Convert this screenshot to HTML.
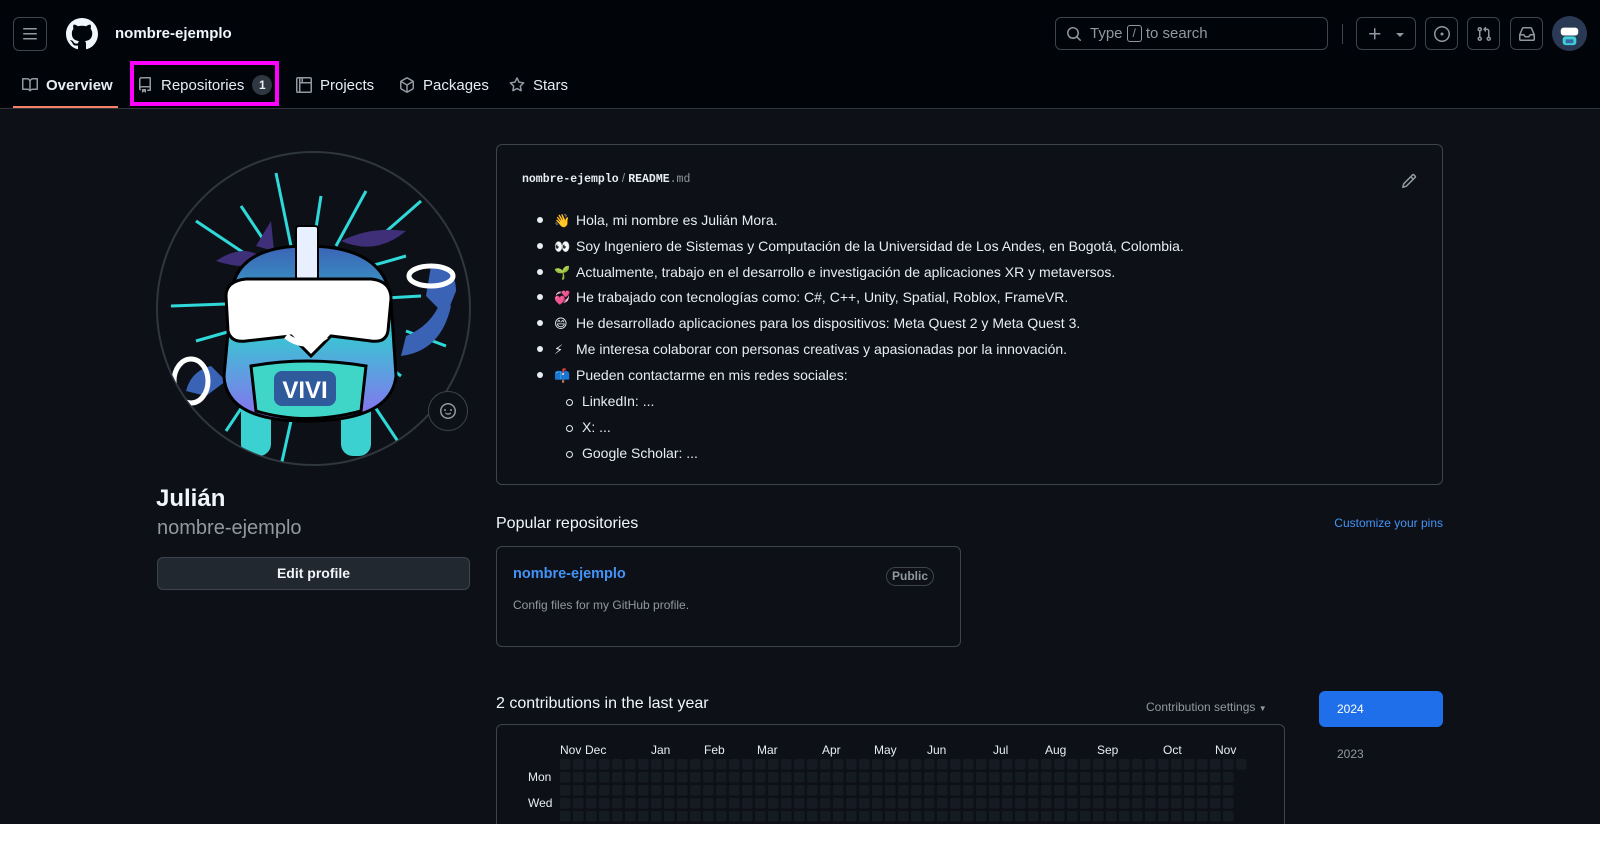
<!DOCTYPE html>
<html><head><meta charset="utf-8">
<style>
*{box-sizing:border-box;margin:0;padding:0}
html,body{width:1600px;height:859px;overflow:hidden;background:#fff;font-family:"Liberation Sans","Noto Sans CJK JP",sans-serif;color:#e6edf3}
#app{position:absolute;left:0;top:0;width:1600px;height:824px;background:#0d1117;overflow:hidden}
.hdr{position:absolute;left:0;top:0;width:1600px;height:109px;background:#010409;border-bottom:1px solid #30363d}
.abs{position:absolute}
.btn{position:absolute;border:1px solid #3d444d;border-radius:6px;display:flex;align-items:center;justify-content:center}
.tab{position:absolute;top:75px;font-size:15px;color:#e6edf3;display:flex;align-items:center;gap:8px;height:20px}
.tab svg{fill:#9198a1}
.card{position:absolute;border:1px solid #3d444d;border-radius:6px}
ul.r{position:absolute;left:539px;top:210px;list-style:none;font-size:14px;color:#e6edf3}
ul.r li{height:25.8px;line-height:20px;position:relative;padding-left:15px;white-space:nowrap}
ul.r li:before{content:"";position:absolute;left:-2px;top:7px;width:6px;height:6px;border-radius:50%;background:#e6edf3}
ul.r li .e{display:inline-block;width:22px;font-size:13px;font-family:"DejaVu Sans",sans-serif}
ul.s li{padding-left:43px}
ul.s li:before{left:27px;top:8px;width:5px;height:5px;background:none;border:1.2px solid #e6edf3}
.mo{position:absolute;top:743px;font-size:12px;color:#e6edf3}
</style></head><body>
<div id="app">
<div class="hdr">
  <div class="btn" style="left:13px;top:17px;width:34px;height:34px">
    <svg width="16" height="16" viewBox="0 0 16 16" fill="#9198a1"><path d="M1 2.75A.75.75 0 0 1 1.75 2h12.5a.75.75 0 0 1 0 1.5H1.75A.75.75 0 0 1 1 2.75Zm0 5A.75.75 0 0 1 1.75 7h12.5a.75.75 0 0 1 0 1.5H1.75A.75.75 0 0 1 1 7.75ZM1.75 12h12.5a.75.75 0 0 1 0 1.5H1.75a.75.75 0 0 1 0-1.5Z"/></svg>
  </div>
  <svg class="abs" style="left:66px;top:18px" width="32" height="32" viewBox="0 0 16 16" fill="#f0f6fc"><path d="M8 0c4.42 0 8 3.58 8 8a8.013 8.013 0 0 1-5.45 7.590c-.4.08-.55-.17-.55-.38 0-.27.01-1.130.01-2.2 0-.75-.25-1.23-.54-1.48 1.78-.2 3.65-.88 3.65-3.95 0-.88-.31-1.590-.82-2.150.08-.2.36-1.020-.08-2.12 0 0-.67-.22-2.2.82-.64-.18-1.32-.27-2-.27-.68 0-1.36.09-2 .27-1.53-1.03-2.2-.82-2.2-.82-.44 1.1-.16 1.92-.08 2.12-.51.56-.82 1.28-.82 2.15 0 3.06 1.86 3.75 3.64 3.95-.23.2-.44.55-.51 1.070-.46.21-1.61.55-2.33-.66-.15-.24-.6-.83-1.23-.82-.67.01-.27.38.01.53.34.19.73.9.82 1.13.16.45.68 1.31 2.69.94 0 .67.01 1.3.01 1.49 0 .21-.15.45-.55.38A7.995 7.995 0 0 1 0 8c0-4.42 3.58-8 8-8Z"/></svg>
  <div class="abs" style="left:115px;top:25px;font-size:15px;font-weight:bold;color:#f0f6fc">nombre-ejemplo</div>

  <div class="btn" style="left:1055px;top:17px;width:273px;height:33px;justify-content:flex-start;padding-left:10px;gap:8px;color:#9198a1;font-size:15px">
    <svg width="16" height="16" viewBox="0 0 16 16" fill="#9198a1"><path d="M10.68 11.74a6 6 0 0 1-7.922-8.982 6 6 0 0 1 8.982 7.922l3.04 3.04a.749.749 0 0 1-1.06 1.06ZM11.5 7a4.499 4.499 0 1 0-8.997 0A4.499 4.499 0 0 0 11.5 7Z"/></svg>
    <span>Type <span style="display:inline-block;border:1px solid #9198a1;border-radius:3px;width:15px;height:17px;font-size:12px;text-align:center;line-height:15px;vertical-align:middle">/</span> to search</span>
  </div>
  <div class="abs" style="left:1342px;top:24px;width:1px;height:20px;background:#3d444d"></div>
  <div class="btn" style="left:1356px;top:17px;width:60px;height:33px;gap:12px">
    <svg width="16" height="16" viewBox="0 0 16 16" fill="#9198a1"><path d="M7.75 2a.75.75 0 0 1 .75.75V7h4.25a.75.75 0 0 1 0 1.5H8.5v4.25a.75.75 0 0 1-1.5 0V8.5H2.75a.75.75 0 0 1 0-1.5H7V2.75A.75.75 0 0 1 7.75 2Z"/></svg>
    <svg width="10" height="10" viewBox="0 0 10 10" fill="#9198a1"><path d="M1 4h8L5 8z"/></svg>
  </div>
  <div class="btn" style="left:1425px;top:17px;width:33px;height:33px">
    <svg width="16" height="16" viewBox="0 0 16 16" fill="#9198a1"><path d="M8 9.5a1.5 1.5 0 1 0 0-3 1.5 1.5 0 0 0 0 3Z"/><path d="M8 0a8 8 0 1 1 0 16A8 8 0 0 1 8 0ZM1.5 8a6.5 6.5 0 1 0 13 0 6.5 6.5 0 0 0-13 0Z"/></svg>
  </div>
  <div class="btn" style="left:1467px;top:17px;width:33px;height:33px">
    <svg width="16" height="16" viewBox="0 0 16 16" fill="#9198a1"><path d="M1.5 3.25a2.25 2.25 0 1 1 3 2.122v5.256a2.251 2.251 0 1 1-1.5 0V5.372A2.25 2.25 0 0 1 1.5 3.25Zm5.677-.177L9.573.677A.25.25 0 0 1 10 .854V2.5h1A2.5 2.5 0 0 1 13.5 5v5.628a2.251 2.251 0 1 1-1.5 0V5a1 1 0 0 0-1-1h-1v1.646a.25.25 0 0 1-.427.177L7.177 3.427a.25.25 0 0 1 0-.354ZM3.75 2.5a.75.75 0 1 0 0 1.5.75.75 0 0 0 0-1.5Zm0 9.5a.75.75 0 1 0 0 1.5.75.75 0 0 0 0-1.5Zm8.25.75a.75.75 0 1 0 1.5 0 .75.75 0 0 0-1.5 0Z"/></svg>
  </div>
  <div class="btn" style="left:1510px;top:17px;width:33px;height:33px">
    <svg width="16" height="16" viewBox="0 0 16 16" fill="#9198a1"><path d="M2.8 2.06A1.75 1.75 0 0 1 4.41 1h7.18c.7 0 1.333.417 1.61 1.06l2.74 6.395c.04.093.06.194.06.295v4.5A1.75 1.75 0 0 1 14.25 15H1.75A1.75 1.75 0 0 1 0 13.25v-4.5c0-.101.02-.202.06-.295Zm1.61.44a.25.25 0 0 0-.23.152L1.887 8H4.75a.75.75 0 0 1 .6.3L6.625 10h2.75l1.275-1.7a.75.75 0 0 1 .6-.3h2.863L11.82 2.652a.25.25 0 0 0-.23-.152Zm10.09 7h-2.875l-1.275 1.7a.75.75 0 0 1-.6.3h-3.5a.75.75 0 0 1-.6-.3L4.375 9.5H1.5v3.75c0 .138.112.25.25.25h12.5a.25.25 0 0 0 .25-.25Z"/></svg>
  </div>
  <svg class="abs" style="left:1552px;top:16px" width="35" height="35" viewBox="0 0 36 36">
    <circle cx="18" cy="18" r="18" fill="#2a3a55"/><rect x="9" y="12" width="18" height="8" rx="3" fill="#fff"/><rect x="11" y="21" width="14" height="9" rx="3" fill="#3fd1d6"/><rect x="14" y="24" width="8" height="4" fill="#3867a8"/>
  </svg>

  <div class="tab" style="left:22px;font-weight:bold"><svg width="16" height="16" viewBox="0 0 16 16"><path d="M0 1.75A.75.75 0 0 1 .75 1h4.253c1.227 0 2.317.59 3 1.501A3.743 3.743 0 0 1 11.006 1h4.245a.75.75 0 0 1 .75.75v10.5a.75.75 0 0 1-.75.75h-4.507a2.25 2.25 0 0 0-1.591.659l-.622.621a.75.75 0 0 1-1.06 0l-.622-.621A2.25 2.25 0 0 0 5.258 13H.75a.75.75 0 0 1-.75-.75Zm7.251 10.324.004-5.073-.002-2.253A2.25 2.25 0 0 0 5.003 2.5H1.5v9h3.757a3.75 3.75 0 0 1 1.994.574ZM8.755 4.75l-.004 7.322a3.752 3.752 0 0 1 1.992-.572H14.5v-9h-3.495a2.25 2.25 0 0 0-2.25 2.25Z"/></svg>Overview</div>
  <div class="abs" style="left:13px;top:106px;width:105px;height:2px;background:#f78166"></div>
  <div class="abs" style="left:130px;top:61px;width:149px;height:45px;border:4px solid #ff00ff"></div>
  <div class="tab" style="left:137px"><svg width="16" height="16" viewBox="0 0 16 16"><path d="M2 2.5A2.5 2.5 0 0 1 4.5 0h8.75a.75.75 0 0 1 .75.75v12.5a.75.75 0 0 1-.75.75h-2.5a.75.75 0 0 1 0-1.5h1.75v-2h-8a1 1 0 0 0-.714 1.7.75.75 0 1 1-1.072 1.05A2.495 2.495 0 0 1 2 11.5Zm10.5-1h-8a1 1 0 0 0-1 1v6.708A2.486 2.486 0 0 1 4.5 9h8ZM5 12.25a.25.25 0 0 1 .25-.25h3.5a.25.25 0 0 1 .25.25v3.25a.25.25 0 0 1-.4.2l-1.45-1.087a.249.249 0 0 0-.3 0L5.4 15.7a.25.25 0 0 1-.4-.2Z"/></svg>Repositories<span style="display:inline-block;background:#2f3742;border-radius:10px;width:20px;height:20px;text-align:center;line-height:20px;font-size:12px;font-weight:bold">1</span></div>
  <div class="tab" style="left:296px"><svg width="16" height="16" viewBox="0 0 16 16"><path d="M1.75 0h12.5C15.216 0 16 .784 16 1.75v12.5A1.75 1.75 0 0 1 14.25 16H1.75A1.75 1.75 0 0 1 0 14.25V1.75C0 .784.784 0 1.750 0ZM1.5 1.75v12.5c0 .138.112.25.25.25H3V1.5H1.750a.25.25 0 0 0-.25.25ZM14.25 14.5a.25.25 0 0 0 .25-.25V1.75a.25.25 0 0 0-.25-.25H4.5v13ZM5.5 5.5V1.5h1.5v4Z"/><path d="M4.5 5h10v1.5h-10z"/></svg>Projects</div>
  <div class="tab" style="left:399px"><svg width="16" height="16" viewBox="0 0 16 16"><path d="m8.878.392 5.25 3.045c.54.314.872.89.872 1.514v6.098a1.75 1.75 0 0 1-.872 1.514l-5.25 3.045a1.75 1.75 0 0 1-1.756 0l-5.25-3.045A1.75 1.75 0 0 1 1 11.049V4.951c0-.624.332-1.201.872-1.514L7.122.392a1.75 1.75 0 0 1 1.756 0ZM7.875 1.69l-4.63 2.685L8 7.133l4.755-2.758-4.63-2.685a.248.248 0 0 0-.25 0ZM2.5 5.677v5.372c0 .09.047.171.125.216l4.625 2.683V8.432Zm6.25 8.271 4.625-2.683a.25.25 0 0 0 .125-.216V5.677L8.75 8.432Z"/></svg>Packages</div>
  <div class="tab" style="left:509px"><svg width="16" height="16" viewBox="0 0 16 16"><path d="M8 .25a.75.75 0 0 1 .673.418l1.882 3.815 4.21.612a.75.75 0 0 1 .416 1.279l-3.046 2.970.719 4.192a.751.751 0 0 1-1.088.791L8 12.347l-3.766 1.98a.75.75 0 0 1-1.088-.79l.72-4.194L.818 6.374a.75.75 0 0 1 .416-1.28l4.21-.611L7.327.668A.75.75 0 0 1 8 .25Zm0 2.445L6.615 5.5a.75.75 0 0 1-.564.41l-3.097.45 2.240 2.184a.75.75 0 0 1 .216.664l-.528 3.084 2.769-1.456a.75.75 0 0 1 .698 0l2.770 1.456-.53-3.084a.75.75 0 0 1 .216-.664l2.240-2.183-3.096-.45a.75.75 0 0 1-.564-.41L8 2.694Z"/></svg>Stars</div>
</div>

<svg class="abs" style="left:156px;top:151px" width="315" height="315" viewBox="0 0 315 315">
  <defs>
    <clipPath id="c"><circle cx="157.5" cy="157.5" r="156"/></clipPath>
    <linearGradient id="b" x1="0" y1="0" x2="0" y2="1"><stop offset="0" stop-color="#3b63b5"/><stop offset=".5" stop-color="#39c6d3"/><stop offset="1" stop-color="#8a6ff0"/></linearGradient>
  </defs>
  <circle cx="157.5" cy="157.5" r="156.5" fill="#0d1117" stroke="#30363d" stroke-width="2"/>
  <g clip-path="url(#c)">
    <g stroke="#2fd9d9" stroke-width="3">
      <line x1="120" y1="22" x2="135" y2="95"/><line x1="165" y1="45" x2="158" y2="90"/><line x1="210" y1="40" x2="180" y2="95"/>
      <line x1="265" y1="50" x2="225" y2="85"/><line x1="85" y1="55" x2="115" y2="100"/><line x1="40" y1="70" x2="100" y2="110"/>
      <line x1="15" y1="155" x2="70" y2="153"/><line x1="40" y1="190" x2="75" y2="180"/><line x1="250" y1="105" x2="215" y2="115"/>
      <line x1="265" y1="145" x2="230" y2="147"/><line x1="290" y1="195" x2="250" y2="180"/><line x1="245" y1="295" x2="215" y2="250"/>
      <line x1="125" y1="315" x2="135" y2="270"/><line x1="70" y1="280" x2="90" y2="250"/><line x1="245" y1="225" x2="225" y2="210"/>
    </g>
    <path d="M60 110 Q90 90 110 110 Q90 120 60 110Z" fill="#3e2f78"/><path d="M100 95 L115 70 L118 100Z" fill="#3e2f78"/>
    <path d="M185 90 Q215 75 250 80 Q220 105 185 90Z" fill="#3e2f78"/>
    <path d="M275 115 Q300 115 300 140 L290 165 L270 145Z" fill="#3b63b5"/>
    <ellipse cx="275" cy="125" rx="22" ry="10" fill="none" stroke="#fff" stroke-width="5"/>
    <path d="M250 185 Q275 175 285 150 L295 155 Q285 200 245 205Z" fill="#3b63b5"/>
    <path d="M55 215 Q35 220 30 240 L50 245 L70 230Z" fill="#3b63b5"/>
    <ellipse cx="35" cy="230" rx="17" ry="22" fill="none" stroke="#fff" stroke-width="5"/>
    <rect x="85" y="250" width="30" height="55" rx="12" fill="#3bd1d0"/><rect x="185" y="250" width="30" height="55" rx="12" fill="#3bd1d0"/>
    <path d="M75 150 Q75 95 150 95 Q230 95 235 150 L240 225 Q235 270 150 270 Q70 270 68 225Z" fill="url(#b)" stroke="#000" stroke-width="3"/>
    <rect x="140" y="75" width="22" height="55" rx="3" fill="#e8f0ff" stroke="#000" stroke-width="2"/>
    <path d="M70 145 Q70 130 90 128 L215 128 Q235 130 235 148 L232 180 Q230 192 215 190 L175 185 L155 205 L135 185 L90 190 Q75 192 72 180Z" fill="#fff" stroke="#000" stroke-width="3"/>
    <path d="M130 185 Q150 200 170 185" fill="none" stroke="#fff" stroke-width="6"/>
    <path d="M95 215 Q150 205 210 215 L205 260 Q150 275 100 260Z" fill="#3fd6c8" stroke="#000" stroke-width="3"/>
    <rect x="118" y="220" width="62" height="35" rx="8" fill="#2f5a9c"/>
    <text x="149" y="247" text-anchor="middle" font-family="Liberation Sans" font-weight="bold" font-size="24" fill="#fff">VIVI</text>
  </g>
</svg>
<div class="abs" style="left:428px;top:391px;width:40px;height:40px;border-radius:50%;background:#0d1117;border:1px solid #3d444d;display:flex;align-items:center;justify-content:center">
  <svg width="16" height="16" viewBox="0 0 16 16" fill="#9198a1"><path d="M8 0a8 8 0 1 1 0 16A8 8 0 0 1 8 0ZM1.5 8a6.5 6.5 0 1 0 13 0 6.5 6.5 0 0 0-13 0Zm3.82 1.636a.75.75 0 0 1 1.038.175l.007.009c.103.118.22.222.35.31.264.178.683.37 1.285.37.602 0 1.02-.192 1.285-.371.13-.088.247-.192.35-.31l.007-.008a.75.75 0 0 1 1.222.87c-.16.166-.338.316-.53.445-.63.418-1.37.638-2.127.629-.946 0-1.652-.308-2.126-.63a3.331 3.331 0 0 1-.715-.657a.75.75 0 0 1 .183-1.044ZM12 7a1 1 0 1 1-2 0 1 1 0 0 1 2 0ZM5 8a1 1 0 1 1 0-2 1 1 0 0 1 0 2Z"/></svg>
</div>

<div class="abs" style="left:156px;top:485px;font-size:24px;font-weight:bold;color:#f0f6fc">Julián</div>
<div class="abs" style="left:157px;top:517px;font-size:20px;color:#9198a1">nombre-ejemplo</div>
<div class="abs" style="left:157px;top:557px;width:313px;height:33px;background:#212830;border:1px solid #3d444d;border-radius:6px;text-align:center;line-height:31px;font-size:14px;font-weight:bold;color:#f0f6fc">Edit profile</div>

<div class="card" style="left:496px;top:144px;width:947px;height:341px"></div>
<div class="abs" style="left:522px;top:173px;font-family:'Liberation Mono',monospace;font-size:11.5px;color:#e6edf3;font-weight:bold">nombre-ejemplo<span style="color:#9198a1;font-weight:normal;font-family:'Liberation Sans'"> / </span>README<span style="color:#9198a1;font-weight:normal">.md</span></div>
<svg class="abs" style="left:1401px;top:173px" width="16" height="16" viewBox="0 0 16 16" fill="#9198a1"><path d="M11.013 1.427a1.75 1.75 0 0 1 2.474 0l1.086 1.086a1.75 1.75 0 0 1 0 2.474l-8.61 8.61c-.21.21-.47.364-.756.445l-3.251.93a.75.75 0 0 1-.927-.928l.929-3.25c.081-.286.235-.547.445-.758l8.61-8.61Zm.176 4.823L9.75 4.81l-6.286 6.287a.253.253 0 0 0-.064.108l-.558 1.953 1.953-.558a.253.253 0 0 0 .108-.064Zm1.238-3.763a.25.25 0 0 0-.354 0L10.811 3.75l1.439 1.44 1.263-1.263a.25.25 0 0 0 0-.354Z"/></svg>
<ul class="r">
  <li><span class="e">👋</span>Hola, mi nombre es Julián Mora.</li>
  <li><span class="e">👀</span>Soy Ingeniero de Sistemas y Computación de la Universidad de Los Andes, en Bogotá, Colombia.</li>
  <li><span class="e">🌱</span>Actualmente, trabajo en el desarrollo e investigación de aplicaciones XR y metaversos.</li>
  <li><span class="e">💞</span>He trabajado con tecnologías como: C#, C++, Unity, Spatial, Roblox, FrameVR.</li>
  <li><span class="e">😄</span>He desarrollado aplicaciones para los dispositivos: Meta Quest 2 y Meta Quest 3.</li>
  <li><span class="e">⚡</span>Me interesa colaborar con personas creativas y apasionadas por la innovación.</li>
  <li><span class="e">📫</span>Pueden contactarme en mis redes sociales:</li>
</ul>
<ul class="r s" style="top:391px;left:539px">
  <li>LinkedIn: ...</li><li>X: ...</li><li>Google Scholar: ...</li>
</ul>

<div class="abs" style="left:496px;top:515px;font-size:16px;color:#f0f6fc">Popular repositories</div>
<div class="abs" style="left:1300px;top:516px;width:143px;text-align:right;font-size:12px;color:#4493f8">Customize your pins</div>
<div class="card" style="left:496px;top:546px;width:465px;height:101px"></div>
<div class="abs" style="left:513px;top:566px;font-size:14.5px;font-weight:bold;color:#4493f8">nombre-ejemplo</div>
<div class="abs" style="left:886px;top:567px;width:48px;height:19px;border:1px solid #3d444d;border-radius:10px;font-size:12px;font-weight:bold;color:#9198a1;text-align:center;line-height:17px">Public</div>
<div class="abs" style="left:513px;top:598px;font-size:12px;color:#9198a1">Config files for my GitHub profile.</div>

<div class="abs" style="left:496px;top:695px;font-size:16px;color:#f0f6fc">2 contributions in the last year</div>
<div class="abs" style="left:1146px;top:700px;font-size:12px;color:#9198a1">Contribution settings <span style="font-size:8px">▼</span></div>
<div class="card" style="left:496px;top:724px;width:789px;height:140px"></div>
<div class="abs" style="left:1319px;top:691px;width:124px;height:36px;background:#1f6feb;border-radius:6px;font-size:12px;color:#fff;padding-left:18px;line-height:36px">2024</div>
<div class="abs" style="left:1337px;top:747px;font-size:12px;color:#9198a1">2023</div>

<div class="mo" style="left:560px">Nov</div><div class="mo" style="left:585px">Dec</div><div class="mo" style="left:651px">Jan</div><div class="mo" style="left:704px">Feb</div><div class="mo" style="left:757px">Mar</div><div class="mo" style="left:822px">Apr</div><div class="mo" style="left:874px">May</div><div class="mo" style="left:927px">Jun</div><div class="mo" style="left:993px">Jul</div><div class="mo" style="left:1045px">Aug</div><div class="mo" style="left:1097px">Sep</div><div class="mo" style="left:1163px">Oct</div><div class="mo" style="left:1215px">Nov</div>
<div class="abs" style="left:528px;top:770px;font-size:12px;color:#e6edf3">Mon</div>
<div class="abs" style="left:528px;top:796px;font-size:12px;color:#e6edf3">Wed</div>
<svg class="abs" style="left:560px;top:759px" width="700" height="70">
  <defs><pattern id="g" width="13" height="13" patternUnits="userSpaceOnUse"><rect width="10.5" height="10.5" rx="2" fill="#151b23"/></pattern></defs>
  <rect x="0" y="0" width="689" height="13" fill="url(#g)"/>
  <rect x="0" y="13" width="676" height="60" fill="url(#g)"/>
</svg>
</div>
</body></html>
